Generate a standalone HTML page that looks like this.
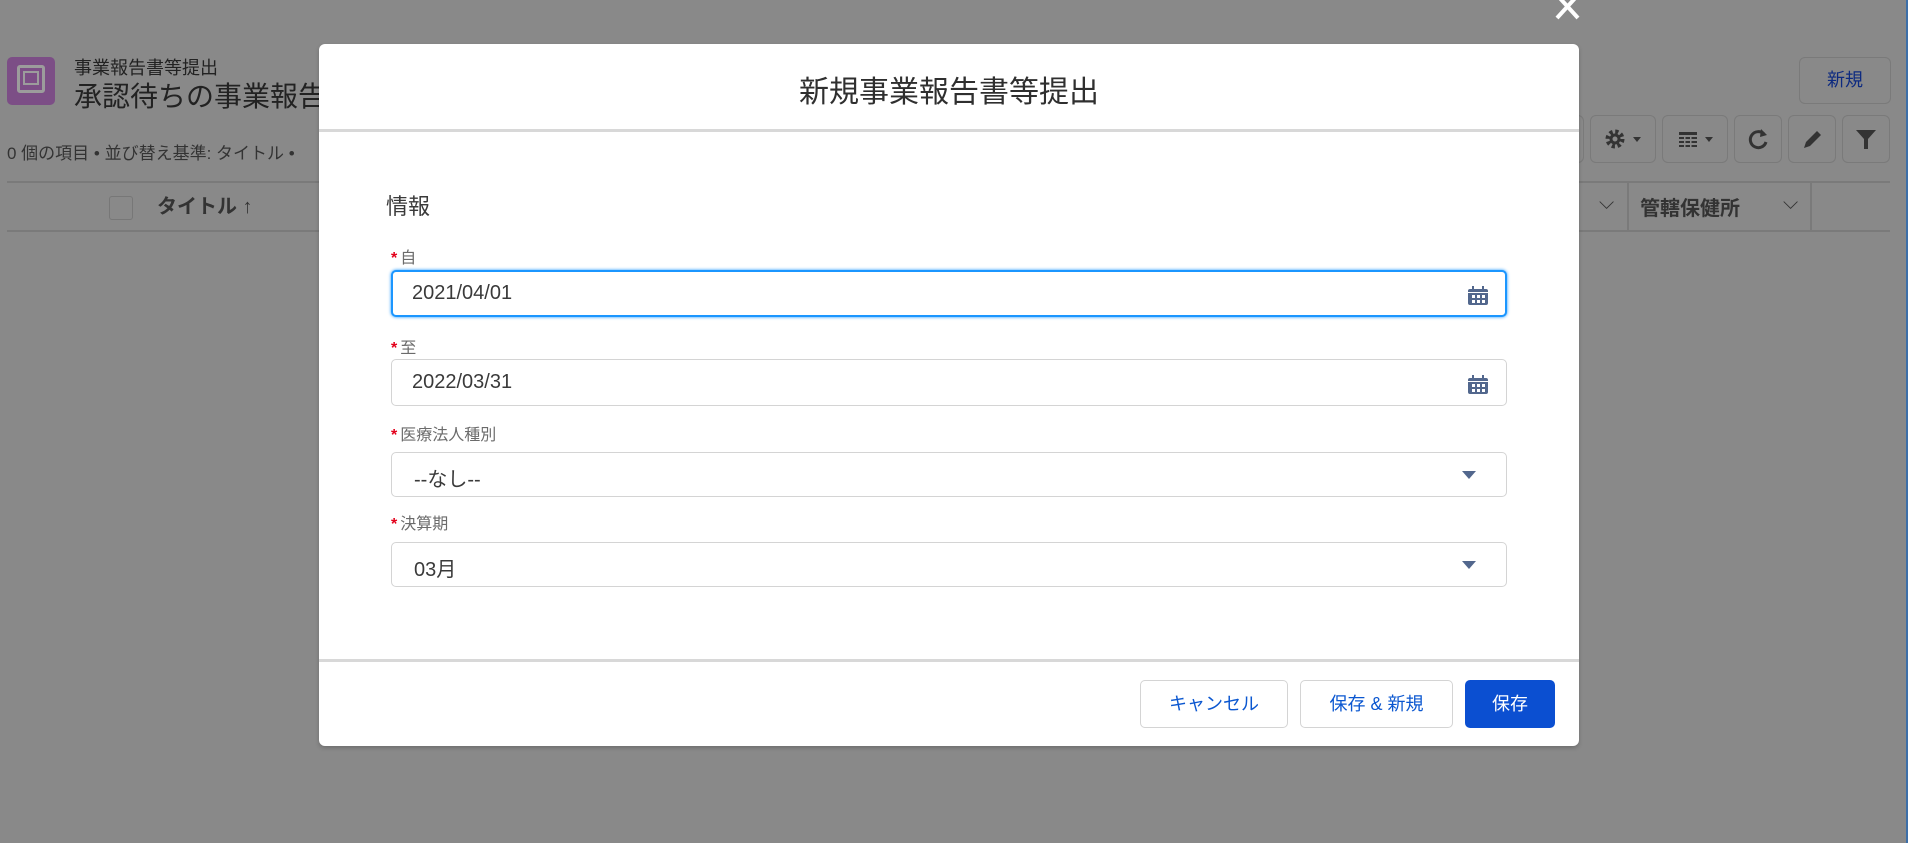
<!DOCTYPE html>
<html><head><meta charset="utf-8"><style>
*{box-sizing:border-box;margin:0;padding:0}
body{width:1908px;height:843px;background:#898989;position:relative;overflow:hidden;font-family:"Liberation Sans","Noto Sans CJK JP",sans-serif;color:#2a2a2a}
.abs{position:absolute}
.tb{position:absolute;top:115px;height:48px;border:1px solid #7a7a7a;border-radius:6px;background:#898989}
.inp{position:absolute;left:391px;width:1116px;border:1px solid #d4d4d4;border-radius:5px;background:#fff;font-size:20px;color:#3a3a3a}
.lbl{position:absolute;left:391px;font-size:16px;color:#6b6b6b}
.lbl b{color:#e3001b;font-weight:bold;margin-right:3px}
.btn{position:absolute;top:680px;height:48px;border:1px solid #d4d4d4;border-radius:5px;background:#fff;color:#0b57d0;font-size:18px;text-align:center;line-height:46px}
</style></head><body>
<div class="abs" style="left:7px;top:57px;width:48px;height:48px;background:#7c4e86;border-radius:5px"></div>
<div class="abs" style="left:17px;top:65px;width:28px;height:28px;border:3px solid #9c9c9c;border-radius:3px"></div>
<div class="abs" style="left:23px;top:71px;width:16px;height:14px;border:2px solid #9c9c9c"></div>
<div class="abs" style="left:74px;top:54px;font-size:18px;color:#222">事業報告書等提出</div>
<div class="abs" style="left:74px;top:75px;font-size:28px;color:#222;white-space:nowrap">承認待ちの事業報告書等</div>
<div class="abs" style="left:7px;top:139px;font-size:17px;color:#333;white-space:nowrap">0 個の項目 • 並び替え基準: タイトル • </div>
<div class="abs" style="left:7px;top:181px;width:1883px;height:2px;background:#7a7a7a"></div>
<div class="abs" style="left:7px;top:230px;width:1883px;height:2px;background:#7a7a7a"></div>
<div class="abs" style="left:109px;top:196px;width:24px;height:24px;border:1px solid #777;border-radius:3px"></div>
<div class="abs" style="left:157px;top:190px;font-size:20px;font-weight:bold;color:#333">タイトル ↑</div>
<div class="abs" style="left:1599px;top:192px;font-size:20px;color:#333">⌵</div>
<div class="abs" style="left:1627px;top:182px;width:2px;height:48px;background:#7a7a7a"></div>
<div class="abs" style="left:1640px;top:192px;font-size:20px;font-weight:bold;color:#333">管轄保健所</div>
<div class="abs" style="left:1783px;top:192px;font-size:20px;color:#333">⌵</div>
<div class="abs" style="left:1810px;top:182px;width:2px;height:48px;background:#7a7a7a"></div>
<div class="abs" style="left:1799px;top:57px;width:92px;height:47px;border:1px solid #7a7a7a;border-radius:6px;text-align:center;line-height:45px;font-size:18px;color:#0d2a80">新規</div>
<div class="tb" style="left:1540px;width:44px"></div>
<div class="tb" style="left:1590px;width:66px"><svg width="66" height="46"><circle cx="24" cy="23" r="7" fill="none" stroke="#333" stroke-width="5" stroke-dasharray="3 2.5"/><circle cx="24" cy="23" r="4" fill="none" stroke="#333" stroke-width="3"/><path d="M42 21h8l-4 5z" fill="#333"/></svg></div>
<div class="tb" style="left:1662px;width:66px"><svg width="66" height="46"><g fill="#333"><rect x="16" y="16" width="18" height="3"/><rect x="16" y="21" width="18" height="2"/><rect x="16" y="25" width="18" height="2"/><rect x="16" y="29" width="18" height="2"/></g><g fill="#898989"><rect x="21" y="20" width="1.5" height="12"/><rect x="27" y="20" width="1.5" height="12"/></g><path d="M42 21h8l-4 5z" fill="#333"/></svg></div>
<div class="tb" style="left:1734px;width:48px"><svg width="46" height="46"><path d="M29 18a8 8 0 1 0 2 8" fill="none" stroke="#333" stroke-width="3"/><path d="M26 13l6 6-7 2z" fill="#333"/></svg></div>
<div class="tb" style="left:1788px;width:48px"><svg width="46" height="46"><path d="M15 32l2-6 11-11 4 4-11 11z" fill="#333"/></svg></div>
<div class="tb" style="left:1842px;width:48px"><svg width="46" height="46"><path d="M13 14h20l-8 9v10h-4V23z" fill="#333"/></svg></div>
<div class="abs" style="left:1906px;top:0;width:2px;height:843px;background:#3d6fa8"></div>
<svg class="abs" style="left:1554px;top:0" width="28" height="22"><path d="M3 -5L24 18M24 -5L3 18" stroke="#fff" stroke-width="4"/></svg>
<div class="abs" style="left:319px;top:44px;width:1260px;height:702px;background:#fff;border-radius:6px;box-shadow:0 2px 4px rgba(0,0,0,.2)"></div>
<div class="abs" style="left:319px;top:67px;width:1260px;text-align:center;font-size:30px;color:#2f2f2f">新規事業報告書等提出</div>
<div class="abs" style="left:319px;top:129px;width:1260px;height:3px;background:#d8d8d8"></div>
<div class="abs" style="left:386px;top:189px;font-size:22px;color:#3a3a3a">情報</div>
<div class="lbl" style="top:244px"><b>*</b>自</div>
<div class="inp" style="top:270px;height:47px;border:2px solid #1b96ff;box-shadow:0 0 3px #1b96ff;padding:10px 0 0 19px">2021/04/01</div>
<div class="lbl" style="top:334px"><b>*</b>至</div>
<div class="inp" style="top:359px;height:47px;padding:11px 0 0 20px">2022/03/31</div>
<div class="lbl" style="top:421px"><b>*</b>医療法人種別</div>
<div class="inp" style="top:452px;height:45px;padding:10px 0 0 22px">--なし--</div>
<div class="lbl" style="top:510px"><b>*</b>決算期</div>
<div class="inp" style="top:542px;height:45px;padding:10px 0 0 22px">03月</div>
<svg class="abs" style="left:1467px;top:285px" width="22" height="22"><rect x="1" y="4" width="20" height="16" rx="2" fill="#52678d"/><rect x="5" y="1" width="2" height="5" fill="#52678d"/><rect x="15" y="1" width="2" height="5" fill="#52678d"/><rect x="1" y="7" width="20" height="1" fill="#fff"/><g fill="#fff"><rect x="5" y="10" width="3" height="3"/><rect x="10" y="10" width="3" height="3"/><rect x="15" y="10" width="3" height="3"/><rect x="5" y="15" width="3" height="3"/><rect x="10" y="15" width="3" height="3"/><rect x="15" y="15" width="3" height="3"/></g></svg>
<svg class="abs" style="left:1467px;top:374px" width="22" height="22"><rect x="1" y="4" width="20" height="16" rx="2" fill="#52678d"/><rect x="5" y="1" width="2" height="5" fill="#52678d"/><rect x="15" y="1" width="2" height="5" fill="#52678d"/><rect x="1" y="7" width="20" height="1" fill="#fff"/><g fill="#fff"><rect x="5" y="10" width="3" height="3"/><rect x="10" y="10" width="3" height="3"/><rect x="15" y="10" width="3" height="3"/><rect x="5" y="15" width="3" height="3"/><rect x="10" y="15" width="3" height="3"/><rect x="15" y="15" width="3" height="3"/></g></svg>
<svg class="abs" style="left:1462px;top:470px" width="14" height="10"><path d="M0 1h14l-7 8z" fill="#52678d"/></svg>
<svg class="abs" style="left:1462px;top:560px" width="14" height="10"><path d="M0 1h14l-7 8z" fill="#52678d"/></svg>
<div class="abs" style="left:319px;top:659px;width:1260px;height:3px;background:#d8d8d8"></div>
<div class="btn" style="left:1140px;width:148px">キャンセル</div>
<div class="btn" style="left:1300px;width:153px">保存 &amp; 新規</div>
<div class="btn" style="left:1465px;width:90px;background:#0b4fd1;border-color:#0b4fd1;color:#fff">保存</div>
</body></html>
